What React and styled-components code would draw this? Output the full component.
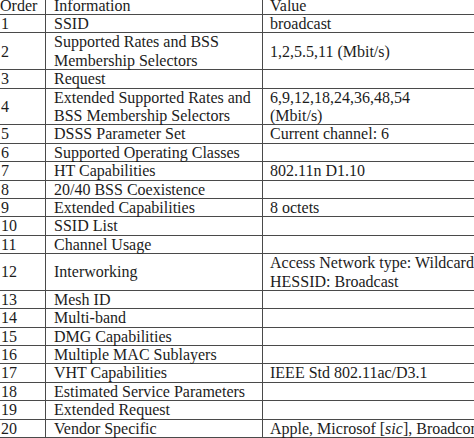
import React from 'react';
import styled, { createGlobalStyle } from 'styled-components';

const PITCH = 18.4;

const GlobalStyle = createGlobalStyle`
  html, body {
    margin: 0;
    padding: 0;
    background: #fff;
    overflow: hidden;
  }
  body {
    width: 474px;
    height: 438px;
  }
`;

const Table = styled.div`
  width: 520px;
  margin-top: -3.4px;
  font-family: "Liberation Serif", "Times New Roman", serif;
  font-size: 16px;
  color: #1c1c1c;
`;

const Row = styled.div`
  display: grid;
  grid-template-columns: 45px 217px 1fr;
  height: ${(p) => p.$lines * PITCH}px;
  box-sizing: border-box;
  border-bottom: 1px solid #4a4a4a;
`;

const Cell = styled.div`
  display: flex;
  align-items: center;
  line-height: ${PITCH}px;
  white-space: nowrap;
  padding-left: ${(p) => p.$pad}px;
  border-left: ${(p) => (p.$first ? 'none' : '1px solid #4a4a4a')};
`;

const rows = [
  ['1', 'SSID', 'broadcast'],
  ['2', ['Supported Rates and BSS', 'Membership Selectors'], '1,2,5.5,11 (Mbit/s)'],
  ['3', 'Request', ''],
  ['4', ['Extended Supported Rates and', 'BSS Membership Selectors'], ['6,9,12,18,24,36,48,54', '(Mbit/s)']],
  ['5', 'DSSS Parameter Set', 'Current channel: 6'],
  ['6', 'Supported Operating Classes', ''],
  ['7', 'HT Capabilities', '802.11n D1.10'],
  ['8', '20/40 BSS Coexistence', ''],
  ['9', 'Extended Capabilities', '8 octets'],
  ['10', 'SSID List', ''],
  ['11', 'Channel Usage', ''],
  ['12', 'Interworking', ['Access Network type: Wildcard', 'HESSID: Broadcast']],
  ['13', 'Mesh ID', ''],
  ['14', 'Multi-band', ''],
  ['15', 'DMG Capabilities', ''],
  ['16', 'Multiple MAC Sublayers', ''],
  ['17', 'VHT Capabilities', 'IEEE Std 802.11ac/D3.1'],
  ['18', 'Estimated Service Parameters', ''],
  ['19', 'Extended Request', ''],
  ['20', 'Vendor Specific', 'vendor'],
];

const lineCount = (v) => (Array.isArray(v) ? v.length : 1);

function Text({ value }) {
  if (value === 'vendor') {
    return (
      <span>
        Apple, Microsof [<i>sic</i>], Broadcom
      </span>
    );
  }
  if (Array.isArray(value)) {
    return (
      <span>
        {value.map((line, i) => (
          <React.Fragment key={i}>
            {i > 0 && <br />}
            {line}
          </React.Fragment>
        ))}
      </span>
    );
  }
  return <span>{value}</span>;
}

export default function App() {
  return (
    <>
      <GlobalStyle />
      <Table>
        <Row $lines={1}>
          <Cell $first $pad={0}>Order</Cell>
          <Cell $pad={8}>Information</Cell>
          <Cell $pad={7}>Value</Cell>
        </Row>
        {rows.map(([order, info, value]) => (
          <Row key={order} $lines={Math.max(lineCount(info), lineCount(value))}>
            <Cell $first $pad={1}>{order}</Cell>
            <Cell $pad={8}><Text value={info} /></Cell>
            <Cell $pad={7}><Text value={value} /></Cell>
          </Row>
        ))}
      </Table>
    </>
  );
}
